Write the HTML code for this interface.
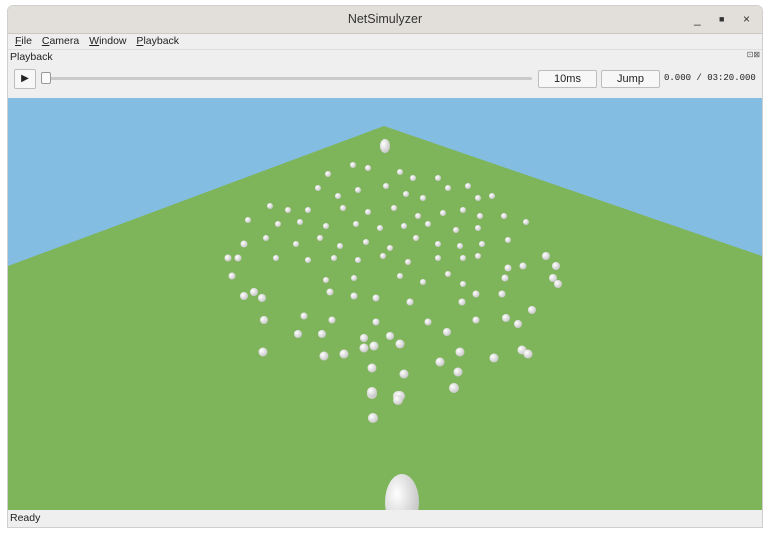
<!DOCTYPE html>
<html><head><meta charset="utf-8"><style>
body{margin:0;width:768px;height:533px;background:#fff;font-family:"Liberation Sans","DejaVu Sans",sans-serif;position:relative;overflow:hidden}
.win{position:absolute;left:7px;top:5px;width:754px;height:521px;background:#efefef;border:1px solid #cfcfcf;border-radius:6px 6px 0 0;overflow:hidden}
.title{height:27px;background:#e2dfdb;border-bottom:1px solid #cbc7c2;text-align:center;line-height:27px;font-size:12.5px;color:#333;position:relative}
.ctl{position:absolute;top:0;font-size:12px;color:#333}
.menu{height:15px;font-size:10.5px;line-height:15px;padding-left:7px;color:#222;border-bottom:1px solid #ddd}
.menu span{margin-right:7px}
.lbl{font-size:10.5px;padding-left:2px;height:14px;line-height:14px;color:#222}
.btn{position:absolute;background:#f7f7f7;border:1px solid #bdbdbd;border-radius:2px;font-size:11px;text-align:center;line-height:16px;color:#222}
.vp{position:absolute;left:0;top:92px;width:754px;height:412px;background:#83bde2}
.status{position:absolute;left:0;top:504px;width:754px;height:17px;font-size:10.5px;line-height:17px;padding-left:2px;color:#222}
</style></head><body>
<div class="win">
<div class="title">NetSimulyzer
<span class="ctl" style="left:686px">_</span><span class="ctl" style="left:711px;font-size:9px">■</span><span class="ctl" style="left:735px">×</span></div>
<div class="menu"><span><u>F</u>ile</span> <span><u>C</u>amera</span> <span><u>W</u>indow</span> <span><u>P</u>layback</span></div>
<div class="lbl">Playback</div>
<div style="position:absolute;right:2px;top:44px;font-size:8px;color:#555">⊡⊠</div>
<div class="btn" style="left:6px;top:63px;width:20px;height:18px;line-height:18px;font-size:10px">▶</div>
<div style="position:absolute;left:36px;top:71px;width:488px;height:3px;background:#c9c9c9;border-radius:2px"></div>
<div style="position:absolute;left:33px;top:66px;width:8px;height:10px;background:#fafafa;border:1px solid #999;border-radius:2px"></div>
<div class="btn" style="left:530px;top:64px;width:57px">10ms</div>
<div class="btn" style="left:593px;top:64px;width:57px">Jump</div>
<div style="position:absolute;left:656px;top:67px;font-family:'Liberation Mono',monospace;font-size:9px;color:#222;white-space:nowrap">0.000 / 03:20.000</div>
<div class="vp"><svg width="754" height="412">
<defs><radialGradient id="g" cx="0.35" cy="0.35" r="0.7"><stop offset="0" stop-color="#fff"/><stop offset="1" stop-color="#c4c4c4"/></radialGradient></defs>
<polygon points="0,168 376,28 754,158 754,412 0,412" fill="#7fb55a"/>
<g fill="url(#g)">
<ellipse cx="377" cy="48" rx="5" ry="7"/>
<ellipse cx="394" cy="404" rx="17" ry="28"/>
<circle cx="345" cy="67" r="3"/><circle cx="320" cy="76" r="3"/><circle cx="360" cy="70" r="3"/><circle cx="392" cy="74" r="3"/><circle cx="405" cy="80" r="3"/><circle cx="430" cy="80" r="3"/><circle cx="440" cy="90" r="3"/><circle cx="460" cy="88" r="3"/>
<circle cx="310" cy="90" r="3"/><circle cx="330" cy="98" r="3"/><circle cx="350" cy="92" r="3"/><circle cx="378" cy="88" r="3"/><circle cx="398" cy="96" r="3"/><circle cx="415" cy="100" r="3"/><circle cx="470" cy="100" r="3"/><circle cx="484" cy="98" r="3"/>
<circle cx="262" cy="108" r="3"/><circle cx="280" cy="112" r="3"/><circle cx="300" cy="112" r="3"/><circle cx="335" cy="110" r="3"/><circle cx="360" cy="114" r="3"/><circle cx="386" cy="110" r="3"/><circle cx="410" cy="118" r="3"/><circle cx="435" cy="115" r="3"/><circle cx="455" cy="112" r="3"/><circle cx="472" cy="118" r="3"/><circle cx="496" cy="118" r="3"/>
<circle cx="240" cy="122" r="3"/><circle cx="270" cy="126" r="3"/><circle cx="292" cy="124" r="3"/><circle cx="318" cy="128" r="3"/><circle cx="348" cy="126" r="3"/><circle cx="372" cy="130" r="3"/><circle cx="396" cy="128" r="3"/><circle cx="420" cy="126" r="3"/><circle cx="448" cy="132" r="3"/><circle cx="470" cy="130" r="3"/><circle cx="518" cy="124" r="3"/>
<circle cx="236" cy="146" r="3.5"/><circle cx="258" cy="140" r="3"/><circle cx="288" cy="146" r="3"/><circle cx="312" cy="140" r="3"/><circle cx="332" cy="148" r="3"/><circle cx="358" cy="144" r="3"/><circle cx="382" cy="150" r="3"/><circle cx="408" cy="140" r="3"/><circle cx="430" cy="146" r="3"/><circle cx="452" cy="148" r="3"/><circle cx="474" cy="146" r="3"/><circle cx="500" cy="142" r="3"/>
<circle cx="220" cy="160" r="3.5"/><circle cx="230" cy="160" r="3.5"/><circle cx="268" cy="160" r="3"/><circle cx="300" cy="162" r="3"/><circle cx="326" cy="160" r="3"/><circle cx="350" cy="162" r="3"/><circle cx="375" cy="158" r="3"/><circle cx="400" cy="164" r="3"/><circle cx="430" cy="160" r="3"/><circle cx="455" cy="160" r="3"/><circle cx="470" cy="158" r="3"/><circle cx="500" cy="170" r="3.5"/><circle cx="515" cy="168" r="3.5"/><circle cx="538" cy="158" r="4"/><circle cx="548" cy="168" r="4"/>
<circle cx="224" cy="178" r="3.5"/><circle cx="318" cy="182" r="3"/><circle cx="346" cy="180" r="3"/><circle cx="392" cy="178" r="3"/><circle cx="415" cy="184" r="3"/><circle cx="440" cy="176" r="3"/><circle cx="455" cy="186" r="3"/><circle cx="497" cy="180" r="3.5"/><circle cx="545" cy="180" r="4"/><circle cx="550" cy="186" r="4"/>
<circle cx="236" cy="198" r="4"/><circle cx="246" cy="194" r="4"/><circle cx="254" cy="200" r="4"/><circle cx="322" cy="194" r="3.5"/><circle cx="346" cy="198" r="3.5"/><circle cx="368" cy="200" r="3.5"/><circle cx="402" cy="204" r="3.5"/><circle cx="454" cy="204" r="3.5"/><circle cx="468" cy="196" r="3.5"/><circle cx="494" cy="196" r="3.5"/>
<circle cx="256" cy="222" r="4"/><circle cx="296" cy="218" r="3.5"/><circle cx="324" cy="222" r="3.5"/><circle cx="368" cy="224" r="3.5"/><circle cx="420" cy="224" r="3.5"/><circle cx="468" cy="222" r="3.5"/><circle cx="498" cy="220" r="4"/><circle cx="510" cy="226" r="4"/><circle cx="524" cy="212" r="4"/>
<circle cx="290" cy="236" r="4"/><circle cx="314" cy="236" r="4"/><circle cx="356" cy="240" r="4"/><circle cx="382" cy="238" r="4"/><circle cx="439" cy="234" r="4"/><circle cx="255" cy="254" r="4.5"/><circle cx="316" cy="258" r="4.5"/><circle cx="336" cy="256" r="4.5"/><circle cx="356" cy="250" r="4.5"/><circle cx="366" cy="248" r="4.5"/><circle cx="392" cy="246" r="4.5"/><circle cx="432" cy="264" r="4.5"/><circle cx="452" cy="254" r="4.5"/><circle cx="486" cy="260" r="4.5"/><circle cx="514" cy="252" r="4.5"/><circle cx="520" cy="256" r="4.5"/>
<circle cx="364" cy="270" r="4.5"/><circle cx="396" cy="276" r="4.5"/><circle cx="450" cy="274" r="4.5"/><circle cx="364" cy="296" r="5"/><circle cx="390" cy="298" r="5"/><circle cx="365" cy="320" r="5"/><circle cx="392" cy="298" r="5"/><circle cx="446" cy="290" r="5"/><circle cx="364" cy="294" r="5"/><circle cx="390" cy="302" r="5"/>
</g></svg></div>
<div class="status">Ready</div>
</div>
</body></html>
